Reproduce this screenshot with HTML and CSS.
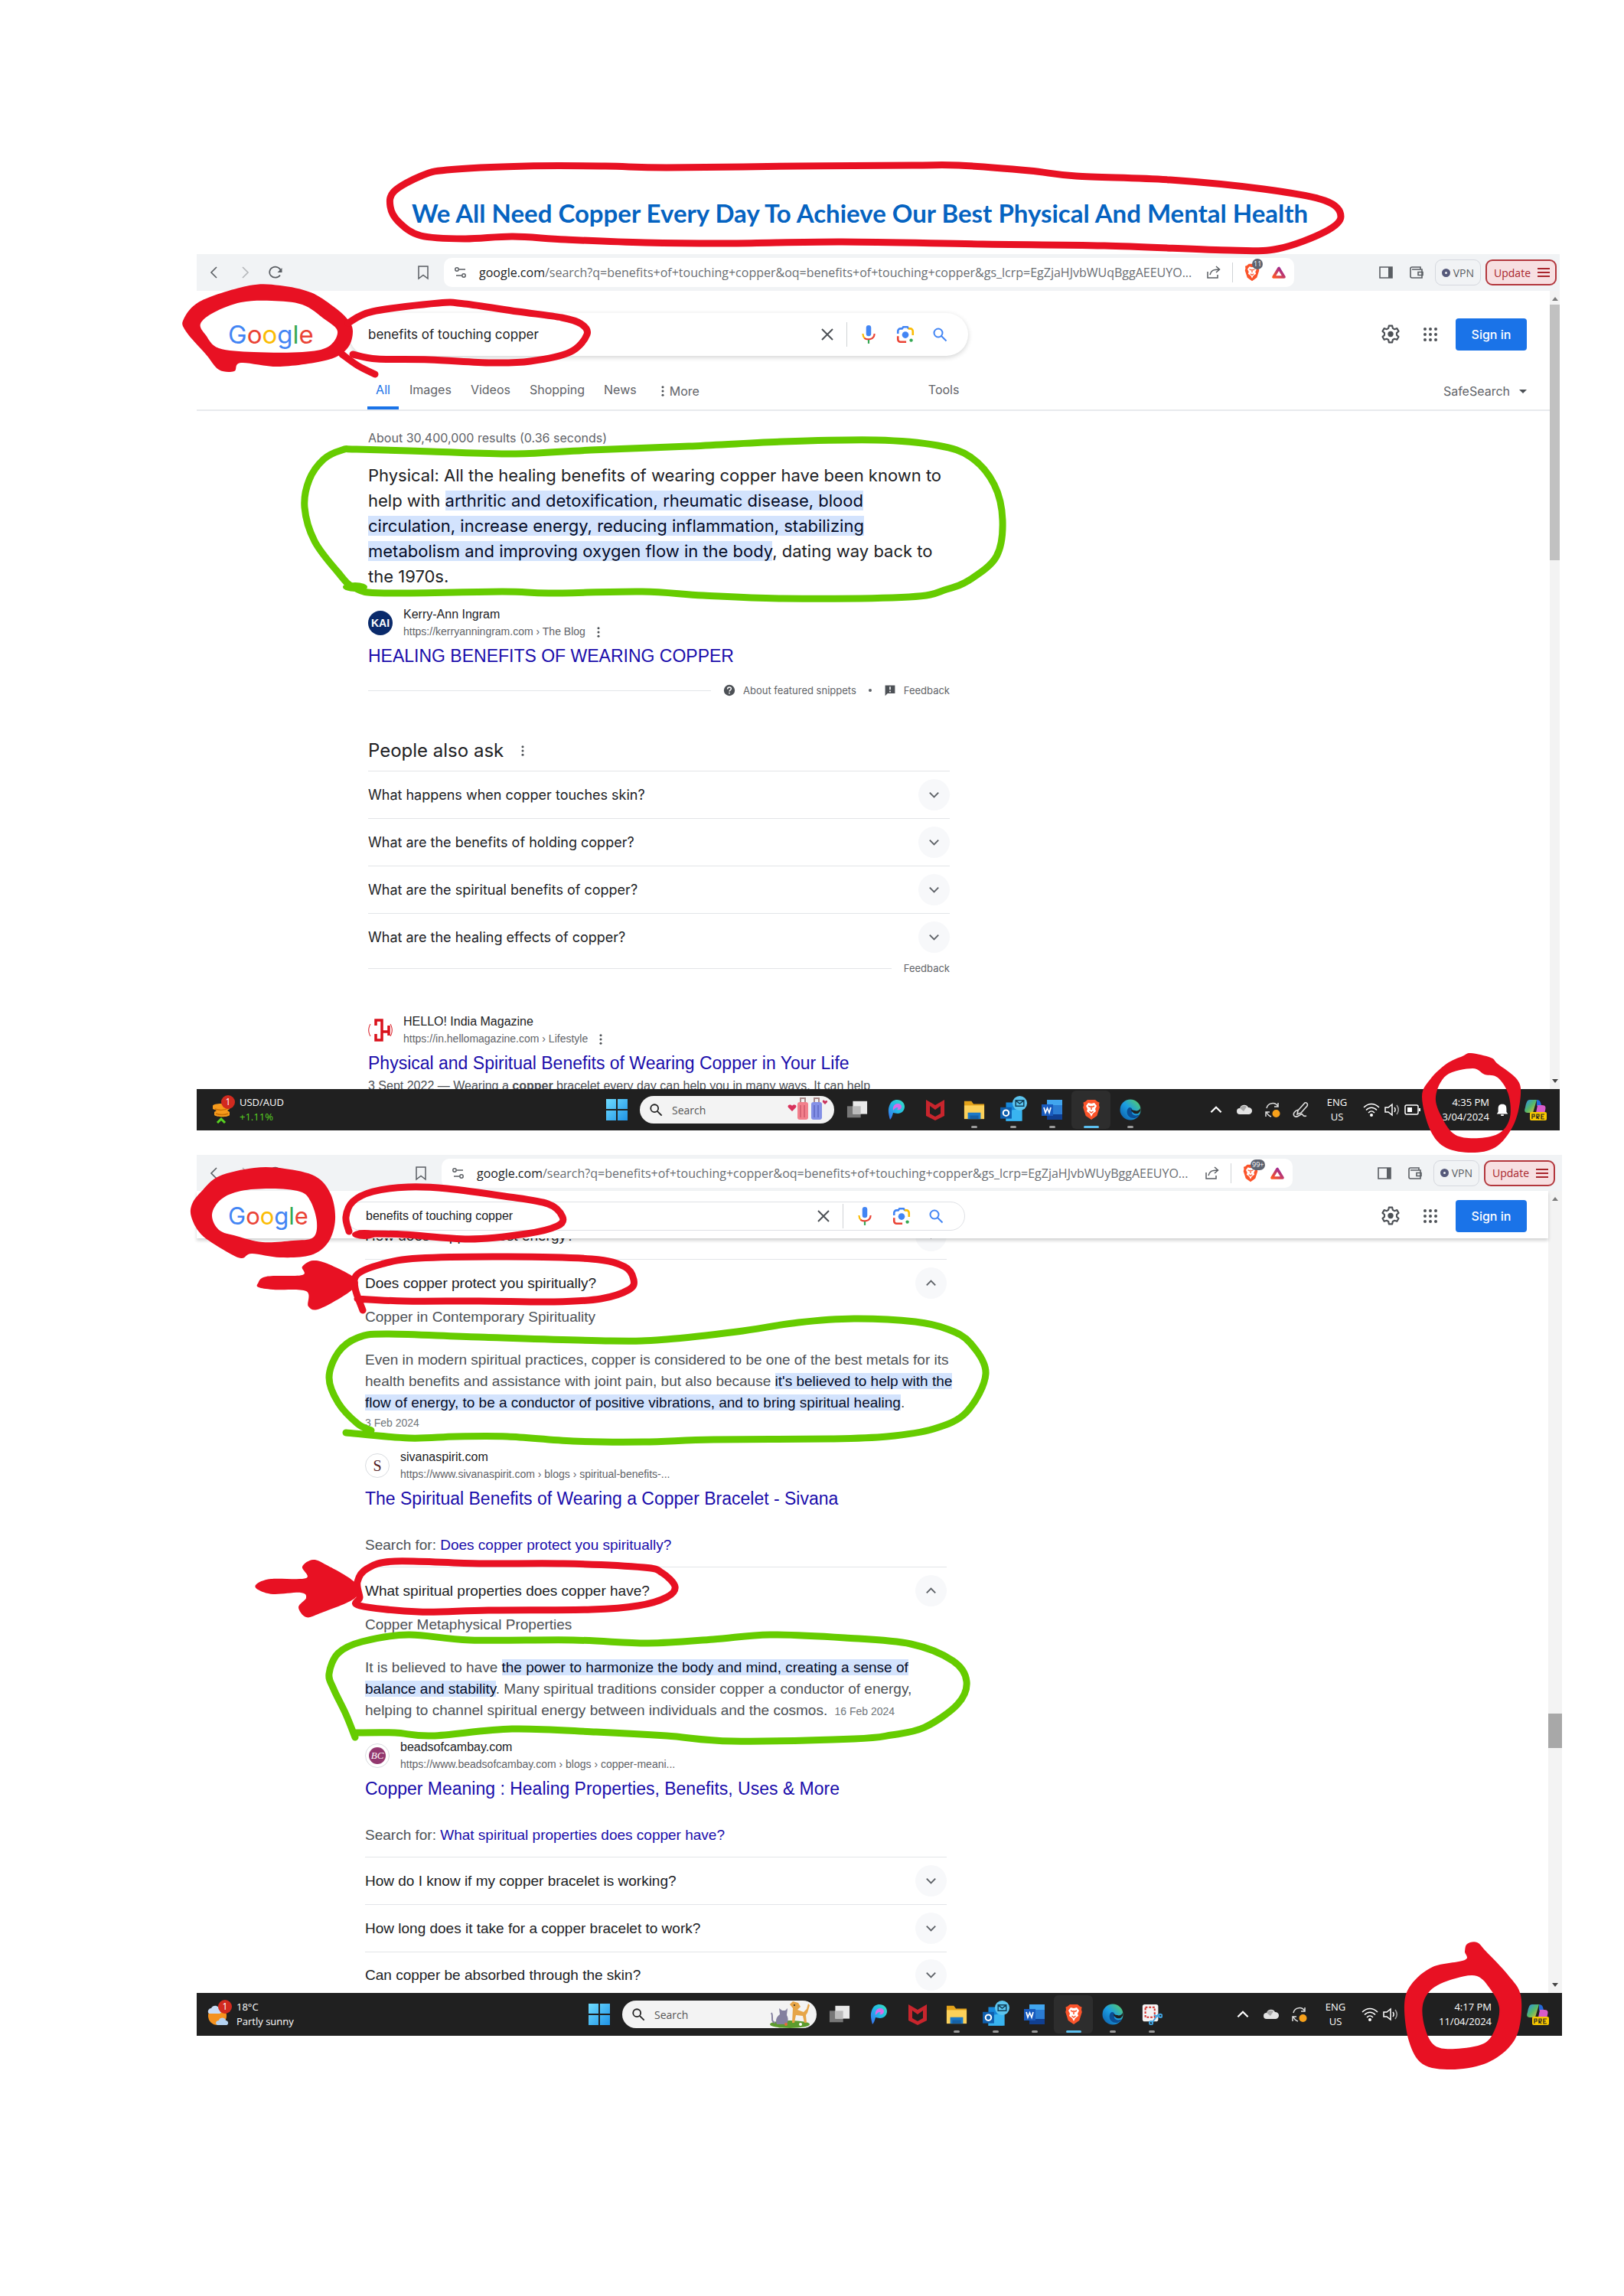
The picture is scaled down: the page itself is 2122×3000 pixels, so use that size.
FILE: index.html
```html
<!DOCTYPE html>
<html lang="en">
  <head>
    <meta charset="UTF-8" />
    <meta name="viewport" content="width=device-width, initial-scale=1.0" />
    <title>We All Need Copper Every Day</title>
    <link rel="stylesheet" href="styles.css">
  </head>
  <body>
    <!-- Shared icons -->
    <svg class="defs" aria-hidden="true">
      <defs>
        <linearGradient id="gWin" x1="0" y1="0" x2="1" y2="1"><stop offset="0" stop-color="#6fdcff"/><stop offset="1" stop-color="#1f93e6"/></linearGradient>
        <linearGradient id="gP" x1="0" y1="1" x2="1" y2="0"><stop offset="0" stop-color="#3a6df0"/><stop offset=".5" stop-color="#22b8e6"/><stop offset="1" stop-color="#37e0c0"/></linearGradient>
        <linearGradient id="gEdge" x1="0" y1="1" x2="1" y2="0"><stop offset="0" stop-color="#0c59a4"/><stop offset=".5" stop-color="#1b9de2"/><stop offset="1" stop-color="#5fd35a"/></linearGradient>
        <linearGradient id="gCop" x1="0" y1="0" x2="1" y2="1"><stop offset="0" stop-color="#2a8cf0"/><stop offset=".5" stop-color="#53b86a"/><stop offset="1" stop-color="#f2c230"/></linearGradient>
        <linearGradient id="gTri" x1="0" y1="1" x2="1" y2="0"><stop offset="0" stop-color="#ff5722"/><stop offset="1" stop-color="#8a1fa8"/></linearGradient>
      </defs>
      <symbol id="back" viewBox="0 0 20 20"><path d="M13 3L6 10l7 7" fill="none" stroke="currentColor" stroke-width="1.6"/></symbol>
      <symbol id="forward" viewBox="0 0 20 20"><path d="M7 3l7 7-7 7" fill="none" stroke="currentColor" stroke-width="1.6"/></symbol>
      <symbol id="reload" viewBox="0 0 20 20"><path d="M16 13.500A7.500 7 0 1 1 17 8" fill="none" stroke="currentColor" stroke-width="1.700"/><path d="M18.500 4v6h-6z" fill="currentColor"/></symbol>
      <symbol id="bookmark" viewBox="0 0 20 20"><path d="M4 2h12v16l-6-4.500L4 18z" fill="none" stroke="currentColor" stroke-width="1.500"/></symbol>
      <symbol id="tune" viewBox="0 0 20 20"><g fill="none" stroke="currentColor" stroke-width="1.500"><circle cx="5" cy="6" r="2.200"/><path d="M8 6h8M4 14h7"/><circle cx="14" cy="14" r="2.200"/></g></symbol>
      <symbol id="share" viewBox="0 0 20 20"><g fill="none" stroke="currentColor" stroke-width="1.500"><path d="M2 9v8h13v-4"/><path d="M5 13c1-5 4-7 12-7M13 2l4.500 4-4.500 4"/></g></symbol>
      <symbol id="lion" viewBox="0 0 24 28"><path d="M7 1h10l3 2.500 2.500 1L22 8l.8 3-3.500 11L12 27l-7.300-5L1.200 11 2 8l-.5-3.500 2.500-1z" fill="#fb542b"/><path d="M12 6l4-1 3 4-2 4 1 3-4 3-2 4-2-4-4-3 1-3-2-4 3-4z" fill="#fff"/><path d="M12 9v5M8 9l3 1.500M16 9l-3 1.500M9.500 16l2.500 2 2.500-2" stroke="#fb542b" stroke-width="1.500" fill="none"/></symbol>
      <symbol id="bat" viewBox="0 0 20 18"><path d="M10 3.500L3 15h14z" fill="none" stroke="url(#gTri)" stroke-width="3.600" stroke-linejoin="round"/></symbol>
      <symbol id="sidebar" viewBox="0 0 20 20"><path d="M2 3h16v14H2z" fill="none" stroke="currentColor" stroke-width="1.600"/><path d="M13 3h5v14h-5z" fill="currentColor"/></symbol>
      <symbol id="wallet" viewBox="0 0 20 20"><g fill="none" stroke="currentColor" stroke-width="1.600"><path d="M15 6V3H4a2 2 0 0 0-2 2v10a2 2 0 0 0 2 2h13V6H4"/><path d="M18 9.500h-6v4h6z"/></g></symbol>
      <symbol id="close" viewBox="0 0 20 20"><path d="M3 3l14 14M17 3L3 17" stroke="#4d5156" stroke-width="2"/></symbol>
      <symbol id="mic" viewBox="0 0 24 24"><rect x="9" y="1" width="6" height="13" rx="3" fill="#4285f4"/><path d="M5 11c0 3 1 4.500 2.500 6" stroke="#fbbc04" stroke-width="2" fill="none"/><path d="M7 16.500c3 2.500 12 2 12-5.500" stroke="#ea4335" stroke-width="2" fill="none"/><path d="M11 18.500h2V23h-2z" fill="#34a853"/></symbol>
      <symbol id="lens" viewBox="0 0 24 24"><circle cx="12" cy="12.500" r="4" fill="#4285f4"/><g fill="none" stroke-width="2.400"><path d="M3 11V8a3 3 0 0 1 3-3h2l1.500-2h5L16 5" stroke="#4285f4"/><path d="M15.500 5H18a3 3 0 0 1 3 3v5" stroke="#fbbc04"/><path d="M3 14v4a3 3 0 0 0 3 3h7" stroke="#ea4335"/></g><circle cx="19" cy="19" r="2" fill="#34a853"/></symbol>
      <symbol id="glass" viewBox="0 0 20 20"><circle cx="8" cy="8" r="5.500" fill="none" stroke="currentColor" stroke-width="2"/><path d="M12 12l6.500 6.500" stroke="currentColor" stroke-width="2"/></symbol>
      <symbol id="gear" viewBox="0 0 24 24"><path d="M10 1.500h4l.6 3 2.200 1.200 2.900-1 2 3.500-2.300 2v2.600l2.300 2-2 3.500-2.900-1-2.200 1.200-.6 3h-4l-.6-3-2.200-1.200-2.900 1-2-3.500 2.300-2v-2.600l-2.300-2 2-3.500 2.900 1 2.200-1.200z" fill="none" stroke="#4d5156" stroke-width="2" stroke-linejoin="round"/><circle cx="12" cy="11.500" r="3.400" fill="#4d5156"/></symbol>
      <symbol id="grid" viewBox="0 0 20 20"><g fill="#4d5156"><circle cx="3" cy="3" r="2"/><circle cx="10" cy="3" r="2"/><circle cx="17" cy="3" r="2"/><circle cx="3" cy="10" r="2"/><circle cx="10" cy="10" r="2"/><circle cx="17" cy="10" r="2"/><circle cx="3" cy="17" r="2"/><circle cx="10" cy="17" r="2"/><circle cx="17" cy="17" r="2"/></g></symbol>
      <symbol id="dots" viewBox="0 0 6 18"><g fill="#4d5156"><circle cx="3" cy="3" r="1.700"/><circle cx="3" cy="9" r="1.700"/><circle cx="3" cy="15" r="1.700"/></g></symbol>
      <symbol id="down" viewBox="0 0 20 20"><path d="M4 7l6 6 6-6" fill="none" stroke="currentColor" stroke-width="2"/></symbol>
      <symbol id="up" viewBox="0 0 20 20"><path d="M4 13l6-6 6 6" fill="none" stroke="currentColor" stroke-width="2"/></symbol>
      <symbol id="help" viewBox="0 0 20 20"><circle cx="10" cy="10" r="9" fill="#4d5156"/><path d="M7 8c0-4 6-4 6-.5 0 2-3 2-3 4.500M10 13.500v2" fill="none" stroke="#fff" stroke-width="1.800"/></symbol>
      <symbol id="flag" viewBox="0 0 20 20"><path d="M2 2h16v13H6l-4 4z" fill="#4d5156"/><path d="M10 4v5M10 11v2" stroke="#fff" stroke-width="2"/></symbol>
      <symbol id="windows" viewBox="0 0 28 28"><path d="M0 0h13v13H0zM15 0h13v13H15zM0 15h13v13H0zM15 15h13v13H15z" fill="url(#gWin)"/></symbol>
      <symbol id="taskview" viewBox="0 0 30 28"><path d="M1 9h19v16H1z" fill="#777"/><path d="M9 2h20v18H9z" fill="#e9e9e9"/><path d="M9 9h11v11H9z" fill="#bbb"/></symbol>
      <symbol id="pieces" viewBox="0 0 24 28"><path d="M4 27C2 20 1 14 3 9 5 3 9 1 13 1c6 0 10 4 10 9s-4 9-9 9c-3 0-4-1-6-1-1 4-2 7-4 9z" fill="url(#gP)"/><path d="M8 15c-1-5 2-9 6-9 3 0 5 2 5 4 0 3-3 5-6 4 1-1 2-2 1-3-3 0-4 2-6 4z" fill="#d96be8"/></symbol>
      <symbol id="mcafee" viewBox="0 0 26 28"><path d="M1 1l12 7 12-7v21l-12 6-12-6z" fill="#c8252d"/><path d="M6 9l7 5 7-5v10l-7 4-7-4z" fill="#202020"/></symbol>
      <symbol id="folder" viewBox="0 0 30 28"><path d="M1 2h10l3 4h15v20H1z" fill="#e3a21a"/><path d="M1 8h28v19H1z" fill="#fcd15a"/><path d="M6 18h18v9H6z" fill="#1c79c7"/><path d="M9 22h12v5H9z" fill="#1560a5"/></symbol>
      <symbol id="outlook" viewBox="0 0 34 36"><path d="M8 9h18v23H8z" fill="#1687d9"/><path d="M8 20l20-4v16H8z" fill="#39b4f0"/><path d="M1 15h14v14H1z" fill="#0f5fae"/><circle cx="8" cy="22" r="3.500" fill="none" stroke="#fff" stroke-width="2"/><circle cx="25" cy="10" r="9" fill="#5cc4ee"/><path d="M20 6.500h10v7H20zl5 4 5-4" fill="none" stroke="#12405a" stroke-width="1.400"/></symbol>
      <symbol id="word" viewBox="0 0 28 28"><path d="M7 1h20v26H7z" fill="#2b7cd3"/><path d="M7 1h20v7H7z" fill="#41a5ee"/><path d="M7 20h20v7H7z" fill="#103f91"/><path d="M0 7h15v15H0z" fill="#185abd"/><path d="M3 11l2 7 2.500-6 2.500 6 2-7" fill="none" stroke="#fff" stroke-width="1.700"/></symbol>
      <symbol id="edge" viewBox="0 0 28 28"><circle cx="14" cy="14" r="13.500" fill="url(#gEdge)"/><path d="M10 14c-2 6 3 12 10 11 3-1 5-3 6-5-5 3-11 1-10-4 1-2 0-5-3-5-1 0-2 1-3 3z" fill="#0b4e94"/><path d="M15 14c1 4 5 6 9 5 3-2 4-5 3-7-1 3-5 4-7 3-3 0-4-2-5-1z" fill="#202020"/></symbol>
      <symbol id="snip" viewBox="0 0 30 30"><rect x="2" y="1" width="22" height="24" rx="3" fill="#f3f3f3"/><rect x="6" y="5" width="13" height="14" fill="none" stroke="#d5302c" stroke-width="2.200" stroke-dasharray="3 2"/><path d="M15 27l9-12M18 16l9 3" stroke="#3fa3e0" stroke-width="2"/><circle cx="14" cy="27" r="2.300" fill="none" stroke="#3fa3e0" stroke-width="2"/><circle cx="27" cy="17" r="2.300" fill="none" stroke="#3fa3e0" stroke-width="2"/></symbol>
      <symbol id="cloud" viewBox="0 0 22 16"><path d="M5 14a4 4 0 0 1 0-8 6 6 0 0 1 11-1 4.500 4.500 0 0 1 1 9z" fill="#e4e4e4"/><path d="M5 6a6 6 0 0 1 9-2l-4 6z" fill="#aaa"/></symbol>
      <symbol id="sync" viewBox="0 0 22 22"><path d="M3 9a8 8 0 0 1 15-2M18 2v5h-5M2 20v-6h5M3 14c1 3 3 5 6 6" fill="none" stroke="#ddd" stroke-width="1.500"/><circle cx="15.500" cy="16" r="5" fill="#f7a11b"/></symbol>
      <symbol id="pen" viewBox="0 0 22 22"><path d="M7 12L16 2c3-1 4 2 3 4l-8 9-5 2zM8 11c-5 1-8 5-6 8 3 3 6 0 9-2s1 4 7 2" fill="none" stroke="#ddd" stroke-width="1.600"/></symbol>
      <symbol id="wifi" viewBox="0 0 22 20"><g fill="none" stroke="#fff" stroke-width="1.500"><path d="M1 7c6-6 14-6 20 0M4 10.500c4-4.500 10-4.500 14 0M7 14c3-3 5-3 8 0"/></g><circle cx="11" cy="17" r="2" fill="#fff"/></symbol>
      <symbol id="volume" viewBox="0 0 22 20"><g fill="none" stroke="#fff" stroke-width="1.500"><path d="M2 7h4l5-4v14l-5-4H2zM14 7c1.500 2 1.500 4 0 6"/><path d="M17 4c3 4 3 8 0 12" opacity=".6"/></g></symbol>
      <symbol id="battery" viewBox="0 0 22 20"><rect x="1" y="4" width="17" height="12" rx="2" fill="none" stroke="#fff" stroke-width="1.500"/><path d="M4 7h6v6H4zM19 8h2v4h-2z" fill="#fff"/></symbol>
      <symbol id="bell" viewBox="0 0 20 20"><path d="M10 2c-5 0-6 3-6 7v4l-2 3h16l-2-3V9c0-4-1-7-6-7zM8 17h4v2H8z" fill="#fff"/></symbol>
      <symbol id="copilot" viewBox="0 0 32 32"><path d="M8 3h9l-5 17H5c-5 0-4-4-3-7 1-5 2-10 6-10z" fill="url(#gCop)"/><path d="M17 3c5 0 5 4 6 7l-6 1z" fill="#2468d8"/><path d="M18 10h6c5 0 5 3 4 7-1 5-2 8-6 8h-7z" fill="#d85bc9"/><rect x="8" y="19" width="22" height="11" rx="2" fill="#f8c800"/><path d="M11 28v-6h3v3h-3M17 28v-6h3v3h-3l3 3M27 22h-4v6h4M23 25h3" stroke="#222" stroke-width="1.200" fill="none"/></symbol>
      <symbol id="money" viewBox="0 0 34 36"><path d="M3 13c0-4 22-4 22 0v4l-3 2 3 2v4c-2 3-17 3-20 0v-4l3-2-5-2z" fill="#f59a1c"/><path d="M6 17c5 2 13 2 17-1M7 23c5 2 12 2 16 0" stroke="#c96f05" stroke-width="1.500" fill="none"/><path d="M9 35l5-5 5 5" fill="none" stroke="#58d321" stroke-width="3"/></symbol>
      <symbol id="weather" viewBox="0 0 34 36"><circle cx="13" cy="20" r="12" fill="#f5921e"/><path d="M2 17c-3-3 0-7 3-7 2-5 10-4 10 1 4 1 4 6 0 6z" fill="#c8dcf5"/><path d="M14 32c-4 0-4-6 1-6 1-5 9-4 9 0 4 0 4 6 1 6z" fill="#b4d2f2"/></symbol>
      <symbol id="luggage" viewBox="0 0 54 36"><path d="M7 20l-5-5c-2-3 3-5 5-2 2-3 7-1 5 2z" fill="#d8325c"/><path d="M18 8V3h6v5M36 8V3h6v5" fill="none" stroke="#a88" stroke-width="2"/><rect x="14" y="8" width="14" height="23" rx="3" fill="#f2808c"/><rect x="32" y="8" width="14" height="23" rx="3" fill="#8490e6"/><path d="M18 12v16M23 12v16" stroke="#cf5a6b" stroke-width="1.500"/><path d="M36 12v16M41 12v16" stroke="#5d68c4" stroke-width="1.500"/><path d="M50 11l-3-3c-1-3 2-3 3-1 1-2 4-1 3 1z" fill="#c9315c"/></symbol>
      <symbol id="pets" viewBox="0 0 54 36"><ellipse cx="27" cy="31" rx="26" ry="5" fill="#5d9c2e"/><path d="M10 31c-3-6 1-11 4-13l-1-8 4 3h4l3-3-1 9c3 5 1 10 0 12z" fill="#84809f"/><path d="M8 29c-7-2-2-8-5-13" fill="none" stroke="#84809f" stroke-width="2"/><path d="M27 5l4-4 7 2 3 5-4 4 8 3 4-4 2-7 2 2-3 10-2 3 1 10h-3l-2-9-9-1-2 10h-3l1-19z" fill="#e6a548"/><circle cx="33" cy="6" r="1" fill="#222"/><circle cx="22" cy="31" r="2" fill="#e56a3a"/><circle cx="41" cy="31" r="2" fill="#fff"/></symbol>
    </svg>

    <main class="sheet">
      <h1>We All Need Copper Every Day To Achieve Our Best Physical And Mental Health</h1>

      <section class="shot shot-first">
        <div class="toolbar">
          <div class="nav">
            <button aria-label="Back"><svg><use href="#back"/></svg></button>
            <button aria-label="Forward" class="faded"><svg><use href="#forward"/></svg></button>
            <button aria-label="Reload"><svg><use href="#reload"/></svg></button>
            <button aria-label="Bookmark" class="push"><svg><use href="#bookmark"/></svg></button>
          </div>
          <div class="address">
            <svg><use href="#tune"/></svg>
            <p class="url"><b>google.com</b>/search?q=benefits+of+touching+copper&amp;oq=benefits+of+touching+copper&amp;gs_lcrp=EgZjaHJvbWUqBggAEEUYO...</p>
            <svg><use href="#share"/></svg>
            <span class="bar"></span>
            <span class="shield"><svg><use href="#lion"/></svg><i>11</i></span>
            <svg><use href="#bat"/></svg>
          </div>
          <div class="chrome-tools">
            <svg><use href="#sidebar"/></svg>
            <svg><use href="#wallet"/></svg>
            <button class="vpn"><i></i>VPN</button>
            <button class="update">Update <span></span></button>
          </div>
        </div>
        <div class="view">
          <div class="page">
            <header class="head">
              <a class="logo" href="#" aria-label="Google"><span class="b">G</span><span class="r">o</span><span class="y">o</span><span class="b">g</span><span class="g">l</span><span class="r">e</span></a>
              <form class="search">
                <input type="text" aria-label="Search" value="benefits of touching copper">
                <svg><use href="#close"/></svg>
                <span class="bar"></span>
                <svg class="big"><use href="#mic"/></svg>
                <svg class="big"><use href="#lens"/></svg>
                <svg class="blue"><use href="#glass"/></svg>
              </form>
              <div class="account">
                <svg class="big"><use href="#gear"/></svg>
                <svg><use href="#grid"/></svg>
                <button class="signin">Sign in</button>
              </div>
            </header>
            <nav class="tabs">
              <a class="active" href="#">All</a>
              <a href="#">Images</a>
              <a href="#">Videos</a>
              <a href="#">Shopping</a>
              <a href="#">News</a>
              <a class="more" href="#"><svg class="dots"><use href="#dots"/></svg>More</a>
              <a class="tools" href="#">Tools</a>
              <button class="safe">SafeSearch <span></span></button>
            </nav>
            <div class="results">
              <p class="stats">About 30,400,000 results (0.36 seconds)</p>
              <p class="answer">Physical: All the healing benefits of wearing copper have been known to<br>help with <mark>arthritic and detoxification, rheumatic disease, blood<br>circulation, increase energy, reducing inflammation, stabilizing<br>metabolism and improving oxygen flow in the body</mark>, dating way back to<br>the 1970s.</p>
              <div class="site">
                <span class="favicon kai">KAI</span>
                <div>
                  <div class="name">Kerry-Ann Ingram</div>
                  <div class="path">https://kerryanningram.com › The Blog <svg class="dots"><use href="#dots"/></svg></div>
                </div>
              </div>
              <h3><a href="#">HEALING BENEFITS OF WEARING COPPER</a></h3>
              <div class="foot snippet-foot">
                <span class="rule"></span>
                <a href="#"><svg><use href="#help"/></svg>About featured snippets</a>
                <span class="dot"></span>
                <a href="#"><svg><use href="#flag"/></svg>Feedback</a>
              </div>
              <h2>People also ask <svg class="dots"><use href="#dots"/></svg></h2>
              <button class="question">What happens when copper touches skin?<i><svg><use href="#down"/></svg></i></button>
              <button class="question">What are the benefits of holding copper?<i><svg><use href="#down"/></svg></i></button>
              <button class="question">What are the spiritual benefits of copper?<i><svg><use href="#down"/></svg></i></button>
              <button class="question">What are the healing effects of copper?<i><svg><use href="#down"/></svg></i></button>
              <div class="foot paa-foot">
                <span class="rule"></span>
                <a href="#">Feedback</a>
              </div>
              <div class="site site-hello">
                <span class="favicon"><svg viewBox="0 0 32 32"><path d="M10 10V3h8v26h-8v-8M18 18h8M27 10v13" fill="none" stroke="#d9121c" stroke-width="3.500"/><path d="M3 8c-3 5-3 11 0 16M29 8c3 5 3 11 0 16" fill="none" stroke="#d9121c" stroke-width="1"/></svg></span>
                <div>
                  <div class="name">HELLO! India Magazine</div>
                  <div class="path">https://in.hellomagazine.com › Lifestyle <svg class="dots"><use href="#dots"/></svg></div>
                </div>
              </div>
              <h3><a href="#">Physical and Spiritual Benefits of Wearing Copper in Your Life</a></h3>
              <p class="cut">3 Sept 2022 — Wearing a <b>copper</b> bracelet every day can help you in many ways. It can help</p>
            </div>
          </div>
          <div class="scroll"><span></span></div>
        </div>
        <footer class="taskbar">
          <div class="widget"><span class="alert"><svg><use href="#money"/></svg><i>1</i></span><p>USD/AUD<br><span class="gain">+1.11%</span></p></div>
          <svg class="win"><use href="#windows"/></svg>
          <label class="find"><svg><use href="#glass"/></svg><input type="text" placeholder="Search" aria-label="Search Windows"><svg class="art"><use href="#luggage"/></svg></label>
          <div class="apps">
            <span><svg><use href="#taskview"/></svg></span>
            <span><svg><use href="#pieces"/></svg></span>
            <span><svg><use href="#mcafee"/></svg></span>
            <span class="open"><svg><use href="#folder"/></svg></span>
            <span class="open"><svg class="tall"><use href="#outlook"/></svg></span>
            <span class="open"><svg><use href="#word"/></svg></span>
            <span class="open current"><svg><use href="#lion"/></svg></span>
            <span class="open"><svg><use href="#edge"/></svg></span>
          </div>
          <div class="tray">
            <span><svg class="white"><use href="#up"/></svg></span>
            <span><svg><use href="#cloud"/></svg></span>
            <span><svg><use href="#sync"/></svg></span>
            <span><svg><use href="#pen"/></svg></span>
            <p class="lang">ENG<br>US</p>
            <svg><use href="#wifi"/></svg><svg><use href="#volume"/></svg><svg><use href="#battery"/></svg>
            <p class="clock">4:35 PM<br>3/04/2024</p>
            <svg class="bell"><use href="#bell"/></svg>
            <svg class="copilot"><use href="#copilot"/></svg>
          </div>
        </footer>
      </section>

      <section class="shot shot-second">
        <div class="toolbar">
          <div class="nav">
            <button aria-label="Back"><svg><use href="#back"/></svg></button>
            <button aria-label="Forward" class="faded"><svg><use href="#forward"/></svg></button>
            <button aria-label="Reload"><svg><use href="#reload"/></svg></button>
            <button aria-label="Bookmark" class="push"><svg><use href="#bookmark"/></svg></button>
          </div>
          <div class="address">
            <svg><use href="#tune"/></svg>
            <p class="url"><b>google.com</b>/search?q=benefits+of+touching+copper&amp;oq=benefits+of+touching+copper&amp;gs_lcrp=EgZjaHJvbWUyBggAEEUYO...</p>
            <svg><use href="#share"/></svg>
            <span class="bar"></span>
            <span class="shield"><svg><use href="#lion"/></svg><i>99+</i></span>
            <svg><use href="#bat"/></svg>
          </div>
          <div class="chrome-tools">
            <svg><use href="#sidebar"/></svg>
            <svg><use href="#wallet"/></svg>
            <button class="vpn"><i></i>VPN</button>
            <button class="update">Update <span></span></button>
          </div>
        </div>
        <div class="view">
          <div class="page">
            <header class="head sticky">
              <a class="logo" href="#" aria-label="Google"><span class="b">G</span><span class="r">o</span><span class="y">o</span><span class="b">g</span><span class="g">l</span><span class="r">e</span></a>
              <form class="search">
                <input type="text" aria-label="Search" value="benefits of touching copper">
                <svg><use href="#close"/></svg>
                <span class="bar"></span>
                <svg class="big"><use href="#mic"/></svg>
                <svg class="big"><use href="#lens"/></svg>
                <svg class="blue"><use href="#glass"/></svg>
              </form>
              <div class="account">
                <svg class="big"><use href="#gear"/></svg>
                <svg><use href="#grid"/></svg>
                <button class="signin">Sign in</button>
              </div>
            </header>
            <div class="results">
              <div class="under"><button class="question">How does copper boost energy?<i><svg><use href="#down"/></svg></i></button></div>
              <button class="question">Does copper protect you spiritually?<i><svg><use href="#up"/></svg></i></button>
              <p class="topic">Copper in Contemporary Spirituality</p>
              <p class="extract">Even in modern spiritual practices, copper is considered to be one of the best metals for its<br>health benefits and assistance with joint pain, but also because <mark>it's believed to help with the<br>flow of energy, to be a conductor of positive vibrations, and to bring spiritual healing</mark>.</p>
              <p class="date">3 Feb 2024</p>
              <div class="site">
                <span class="favicon sivana">S</span>
                <div>
                  <div class="name">sivanaspirit.com</div>
                  <div class="path">https://www.sivanaspirit.com › blogs › spiritual-benefits-...</div>
                </div>
              </div>
              <h3><a href="#">The Spiritual Benefits of Wearing a Copper Bracelet - Sivana</a></h3>
              <p class="related">Search for: <a href="#">Does copper protect you spiritually?</a></p>
              <button class="question">What spiritual properties does copper have?<i><svg><use href="#up"/></svg></i></button>
              <p class="topic">Copper Metaphysical Properties</p>
              <p class="extract">It is believed to have <mark>the power to harmonize the body and mind, creating a sense of<br>balance and stability</mark>. Many spiritual traditions consider copper a conductor of energy,<br>helping to channel spiritual energy between individuals and the cosmos. <small>16 Feb 2024</small></p>
              <div class="site">
                <span class="favicon beads"><em>BC</em></span>
                <div>
                  <div class="name">beadsofcambay.com</div>
                  <div class="path">https://www.beadsofcambay.com › blogs › copper-meani...</div>
                </div>
              </div>
              <h3><a href="#">Copper Meaning : Healing Properties, Benefits, Uses &amp; More</a></h3>
              <p class="related">Search for: <a href="#">What spiritual properties does copper have?</a></p>
              <button class="question">How do I know if my copper bracelet is working?<i><svg><use href="#down"/></svg></i></button>
              <button class="question">How long does it take for a copper bracelet to work?<i><svg><use href="#down"/></svg></i></button>
              <button class="question last">Can copper be absorbed through the skin?<i><svg><use href="#down"/></svg></i></button>
            </div>
          </div>
          <div class="scroll"><span></span></div>
        </div>
        <footer class="taskbar">
          <div class="widget"><span class="alert"><svg><use href="#weather"/></svg><i>1</i></span><p>18°C<br>Partly sunny</p></div>
          <svg class="win"><use href="#windows"/></svg>
          <label class="find"><svg><use href="#glass"/></svg><input type="text" placeholder="Search" aria-label="Search Windows"><svg class="art"><use href="#pets"/></svg></label>
          <div class="apps">
            <span><svg><use href="#taskview"/></svg></span>
            <span><svg><use href="#pieces"/></svg></span>
            <span><svg><use href="#mcafee"/></svg></span>
            <span class="open"><svg><use href="#folder"/></svg></span>
            <span class="open"><svg class="tall"><use href="#outlook"/></svg></span>
            <span class="open"><svg><use href="#word"/></svg></span>
            <span class="open current"><svg><use href="#lion"/></svg></span>
            <span class="open"><svg><use href="#edge"/></svg></span>
            <span class="open"><svg><use href="#snip"/></svg></span>
          </div>
          <div class="tray">
            <span><svg class="white"><use href="#up"/></svg></span>
            <span><svg><use href="#cloud"/></svg></span>
            <span><svg><use href="#sync"/></svg></span>
            <p class="lang">ENG<br>US</p>
            <svg><use href="#wifi"/></svg><svg><use href="#volume"/></svg>
            <p class="clock">4:17 PM<br>11/04/2024</p>
            <svg class="bell"><use href="#bell"/></svg>
            <svg class="copilot"><use href="#copilot"/></svg>
          </div>
        </footer>
      </section>

      <!-- Pen marks drawn over the page: data-line is a stroke, data-area a filled shape -->
      <svg class="marks" viewBox="0 0 2122 3000" aria-hidden="true">
        <g class="red">
          <path data-closed data-line="584,222 688,217 791,217 871,219 1044,217 1192,216 1253,216 1345,223 1406,230 1529,235 1651,247 1731,262 1752,283 1731,303 1670,325 1608,327 1443,321 1284,319 1100,316 958,318 843,317 739,313 670,309 607,312 550,308 521,290 510,270 515,250 550,230"/>
          <path data-area="240,417 263,393 326,373 366,373 406,382 435,400 454,417 461,433 454,455 429,470 366,479 315,474 306,485 286,483 269,463 243,433|262,423 280,408 315,395 355,393 395,398 424,417 441,433 429,453 395,460 332,460 286,455 269,438"/>
          <path data-line="447,463 468,478 490,489"/>
          <path data-line="455,422 487,407 573,396 607,397 676,407 734,415 759,423 767,437 745,460 693,472 642,474 561,470 493,469 461,463"/>
          <path data-area="1911,1380 1922,1376 1948,1382 1957,1390 1982,1410 1987,1430 1979,1467 1957,1497 1927,1506 1890,1500 1869,1477 1858,1433 1869,1410 1890,1390|1890,1405 1924,1396 1940,1404 1957,1408 1971,1430 1973,1460 1960,1480 1933,1487 1902,1483 1884,1460 1876,1433"/>
          <path data-area="251,1573 263,1557 286,1537 332,1526 372,1527 412,1537 432,1560 438,1593 429,1623 406,1640 366,1643 329,1638 315,1644 292,1633 263,1613 250,1590|277,1587 289,1567 315,1556 355,1553 392,1557 406,1570 414,1597 409,1617 383,1621 343,1623 309,1615 286,1607"/>
          <path data-line="456,1609 452,1590 461,1570 487,1557 533,1551 584,1553 659,1563 716,1573 735,1590 728,1602 688,1612 613,1619 527,1613 470,1612"/>
          <ellipse cx="476" cy="1613" rx="16" ry="6"/>
          <path data-line="467,1697 528,1700 626,1700 724,1701 785,1697 822,1685 828,1672 816,1655 773,1645 663,1642 547,1644 498,1652 467,1665 464,1683 474,1712"/>
          <path data-area="337,1677 348,1668 395,1666 395,1655 409,1647 430,1652 466,1672 458,1687 418,1710 403,1707 400,1687 357,1685 338,1682"/>
          <path data-closed data-line="470,2098 547,2106 638,2104 773,2103 834,2098 871,2087 882,2073 865,2055 841,2048 736,2043 626,2043 516,2040 479,2050 467,2067 470,2087"/>
          <path data-area="335,2070 354,2063 400,2062 395,2047 409,2038 427,2045 464,2068 464,2088 418,2108 400,2113 390,2100 400,2088 393,2081 357,2083 337,2077"/>
          <path data-area="1914,2550 1917,2540 1930,2538 1942,2550 1970,2580 1987,2607 1985,2650 1970,2677 1939,2697 1896,2704 1859,2697 1841,2667 1835,2620 1844,2593 1872,2570 1914,2561|1872,2598 1902,2585 1930,2582 1948,2600 1959,2623 1954,2650 1939,2670 1902,2677 1875,2673 1862,2650 1859,2620"/>
        </g>
        <g class="green">
          <path data-closed data-line="466,587 564,590 674,593 772,588 900,583 1023,577 1145,575 1225,582 1268,597 1299,633 1310,680 1302,727 1268,757 1237,770 1188,780 1023,782 919,778 839,773 717,775 656,773 502,775 463,768 441,747 411,707 398,663 404,627 423,600 447,588"/>
          <ellipse cx="464" cy="767" rx="16" ry="6"/>
          <path data-line="452,1872 534,1879 596,1877 663,1877 749,1883 841,1884 932,1881 1085,1880 1159,1877 1220,1867 1263,1845 1288,1795 1268,1755 1239,1737 1196,1727 1116,1723 1043,1728 963,1740 871,1750 798,1752 626,1747 504,1743 467,1748 442,1767 430,1800 442,1833 467,1860 485,1869"/>
          <path data-line="464,2270 452,2240 436,2207 430,2187 442,2160 473,2145 534,2136 614,2143 749,2143 847,2147 932,2142 1006,2136 1104,2140 1190,2148 1245,2170 1263,2197 1251,2227 1208,2257 1165,2267 1116,2272 957,2275 871,2268 779,2263 669,2259 565,2268 516,2264 464,2264"/>
        </g>
      </svg>
    </main>

    <script>
      // Turn a list of points into a smooth curve
      function smooth(text, closed) {
        const p = text.trim().split(" ").map((pair) => pair.split(",").map(Number));
        const n = p.length;
        const at = (i) => (closed ? p[(i + n) % n] : p[Math.max(0, Math.min(n - 1, i))]);
        let d = "M" + p[0];
        for (let i = 0; i < (closed ? n : n - 1); i++) {
          const [a, b, c, e] = [at(i - 1), at(i), at(i + 1), at(i + 2)];
          d += `C${b[0] + (c[0] - a[0]) / 6},${b[1] + (c[1] - a[1]) / 6} ${c[0] - (e[0] - b[0]) / 6},${c[1] - (e[1] - b[1]) / 6} ${c}`;
        }
        return closed ? d + "Z" : d;
      }

      document.querySelectorAll("[data-line]").forEach((path) => {
        path.setAttribute("d", smooth(path.dataset.line, "closed" in path.dataset));
      });
      document.querySelectorAll("[data-area]").forEach((path) => {
        path.setAttribute("d", path.dataset.area.split("|").map((ring) => smooth(ring, true)).join(""));
      });
    </script>
  </body>
</html>
```

FILE: styles.css
```css
:root {
  --text: #202124;
  --text-light: #5f6368;
  --link: #1a0dab;
  --line: #e3e5e8;
  --mark: #d3e3fd;
  --pen-red: #e81123;
  --pen-green: #66cc00;
  --google-font: Inter, "Liberation Sans", sans-serif;
  --system-font: "Open Sans", "Noto Sans", sans-serif;
}

* {
  margin: 0;
  padding: 0;
  box-sizing: border-box;
}

body {
  background: #fff;
  color: var(--text);
  font-family: "Liberation Sans", sans-serif;
  font-size: 19px;
}

button,
input {
  font: inherit;
  color: inherit;
  border: none;
  background: none;
  outline: none;
}

a {
  color: inherit;
  text-decoration: none;
}

i {
  font-style: normal;
}

svg {
  display: block;
  flex: none;
  width: 20px;
  height: 20px;
}

.defs {
  position: absolute;
  width: 0;
  height: 0;
}

.sheet {
  position: relative;
  padding: 256px 81px 342px 257px;
}

h1 {
  padding-left: 281px;
  margin-bottom: 32px;
  font-family: Lato, sans-serif;
  font-size: 33px;
  line-height: 44px;
  color: #0563c1;
  white-space: nowrap;
}

.shot-first {
  margin-right: 3px;
  margin-bottom: 32px;
}

/* Browser toolbar */
.toolbar {
  display: flex;
  align-items: center;
  height: 48px;
  background: #f1f3f5;
  font-family: var(--system-font);
  font-size: 16px;
  color: #5a5e63;
}

.nav {
  display: flex;
  align-items: center;
  gap: 20px;
  width: 323px;
  padding: 0 17px 0 13px;
}

.nav .faded {
  opacity: 0.4;
}

.nav .push {
  margin-left: auto;
}

.address {
  display: flex;
  flex: 1;
  align-items: center;
  gap: 14px;
  height: 38px;
  padding: 0 10px 0 12px;
  border-radius: 10px;
  background: #fff;
  min-width: 0;
}

.url {
  flex: 1;
  white-space: nowrap;
  color: #6a6e73;
}

.url b {
  font-weight: 400;
  color: var(--text);
}

.bar {
  width: 1px;
  height: 26px;
  background: #d0d3d6;
}

.shield {
  position: relative;
}

.shield svg {
  width: 22px;
  height: 24px;
}

.shield i {
  position: absolute;
  top: -6px;
  left: 11px;
  min-width: 14px;
  padding: 0 2px;
  border-radius: 7px;
  background: #5d6370;
  color: #fff;
  font-size: 9px;
  line-height: 14px;
  text-align: center;
}

.chrome-tools {
  display: flex;
  align-items: center;
  justify-content: flex-end;
  gap: 12px;
  width: 347px;
  padding-right: 4px;
}

.chrome-tools svg {
  margin-right: 8px;
}

.vpn,
.update {
  display: flex;
  align-items: center;
  height: 34px;
  margin-left: -6px;
  border-radius: 9px;
  font-size: 14px;
}

.vpn {
  gap: 4px;
  padding: 0 8px;
  border: 1px solid #d5d8de;
}

.vpn i {
  width: 11px;
  height: 11px;
  border: 4px solid #55597a;
  border-radius: 50%;
}

.update {
  gap: 9px;
  padding: 0 7px 0 9px;
  border: 2px solid #b3373d;
  background: #f7dfe1;
  color: #a8252c;
}

.update span {
  width: 16px;
  height: 12px;
  border-top: 2px solid;
  border-bottom: 2px solid;
  background: linear-gradient(#a8252c, #a8252c) center / 100% 2px no-repeat;
}

/* Search page */
.view {
  display: flex;
}

.page {
  flex: 1;
  min-width: 0;
}

.head {
  display: flex;
  align-items: center;
  padding-top: 29px;
}

.logo {
  width: 199px;
  padding-left: 41px;
  font-family: var(--google-font);
  font-size: 33px;
  line-height: 40px;
}

.logo .b { color: #4285f4; }
.logo .r { color: #ea4335; }
.logo .y { color: #fbbc04; }
.logo .g { color: #34a853; }

.search {
  display: flex;
  align-items: center;
  gap: 22px;
  width: 809px;
  height: 56px;
  padding: 0 27px 0 25px;
  border-radius: 28px;
  box-shadow: 0 2px 6px rgba(32, 33, 36, 0.2);
}

.search input {
  flex: 1;
  min-width: 0;
  font-family: var(--google-font);
  font-size: 17px;
}

.search .bar {
  height: 32px;
  margin: 0 -7px;
}

.search .big,
.account .big {
  width: 26px;
  height: 26px;
}

.blue {
  color: #4285f4;
}

.account {
  display: flex;
  align-items: center;
  gap: 23px;
  margin-left: auto;
  padding-right: 30px;
}

.account .big {
  margin-right: 6px;
}

.signin {
  width: 93px;
  height: 42px;
  border-radius: 4px;
  background: #1a73e8;
  color: #fff;
  font-family: var(--google-font);
  font-size: 16px;
  font-weight: 500;
}

.tabs {
  display: flex;
  gap: 25px;
  margin-top: 22px;
  padding-left: 223px;
  border-bottom: 2px solid #e8eaed;
  font-family: var(--google-font);
  font-size: 16px;
  line-height: 44px;
  color: var(--text-light);
}

.tabs .active {
  width: 41px;
  margin-right: -11px;
  text-align: center;
  color: #1a73e8;
  border-bottom: 4px solid;
}

.more {
  display: flex;
  align-items: center;
  gap: 6px;
  margin-left: 6px;
}

.dots {
  width: 6px;
  height: 16px;
}

.tools {
  margin-left: 274px;
}

.safe {
  display: flex;
  align-items: center;
  gap: 12px;
  margin-left: auto;
  padding-right: 30px;
}

.safe span {
  border: 5px solid transparent;
  border-top-color: #4d5156;
  border-bottom: none;
}

.results {
  width: 760px;
  margin-left: 224px;
}

.stats {
  margin: 22px 0 20px;
  font-family: var(--google-font);
  font-size: 16px;
  line-height: 26px;
  color: var(--text-light);
}

.answer {
  font-family: var(--google-font);
  font-size: 22px;
  line-height: 33px;
  white-space: nowrap;
}

mark {
  background: var(--mark);
  color: #040c28;
}

.site {
  display: flex;
  align-items: center;
  gap: 14px;
  margin: 21px 0 5px;
}

.favicon {
  width: 32px;
  height: 32px;
  border-radius: 50%;
  line-height: 32px;
  text-align: center;
}

.favicon svg {
  width: 32px;
  height: 32px;
}

.kai {
  background: #0a2a6b;
  color: #fff;
  font-size: 14px;
  font-weight: 700;
}

.sivana,
.beads {
  border: 1px solid #d9dce0;
  line-height: 30px;
  font-family: "Liberation Serif", serif;
  font-size: 20px;
}

.sivana {
  color: #53211f;
}

.beads em {
  display: block;
  width: 22px;
  height: 22px;
  margin: 4px;
  border-radius: 50%;
  background: #93376f;
  color: #fff;
  font-size: 13px;
  line-height: 22px;
}

.name {
  font-size: 16px;
  line-height: 23px;
}

.path {
  display: flex;
  gap: 14px;
  align-items: center;
  font-size: 14px;
  line-height: 23px;
  color: var(--text-light);
}

h3 {
  font-size: 23px;
  font-weight: 400;
  line-height: 30px;
  color: var(--link);
  white-space: nowrap;
}

.foot {
  display: flex;
  align-items: center;
  gap: 16px;
  font-family: var(--google-font);
  font-size: 13px;
  line-height: 20px;
  color: var(--text-light);
}

.snippet-foot {
  margin: 20px 0 51px;
}

.foot a {
  display: flex;
  align-items: center;
  gap: 10px;
}

.foot svg {
  width: 16px;
  height: 16px;
}

.rule {
  flex: 1;
  height: 1px;
  background: var(--line);
}

.dot {
  width: 4px;
  height: 4px;
  border-radius: 50%;
  background: var(--text-light);
}

h2 {
  display: flex;
  align-items: center;
  gap: 22px;
  margin-bottom: 8px;
  font-family: var(--google-font);
  font-size: 24px;
  font-weight: 400;
  line-height: 36px;
}

.question {
  display: flex;
  align-items: center;
  justify-content: space-between;
  width: 100%;
  height: 62px;
  border-top: 1px solid var(--line);
  text-align: left;
}

.shot-first .question {
  font-family: var(--google-font);
  font-size: 18px;
}

.question i {
  padding: 11px;
  border-radius: 50%;
  background: #f7f8fa;
  color: #5f6368;
}

.question svg {
  width: 19px;
  height: 19px;
}

.site-hello {
  margin-top: 48px;
}

.cut {
  height: 19px;
  overflow: hidden;
  font-size: 16px;
  line-height: 30px;
  color: #4d5156;
}

/* Scroll bars */
.scroll {
  display: flex;
  flex-direction: column;
  justify-content: space-between;
  width: 13px;
  padding: 8px 0;
  background: #f3f3f3;
}

.scroll::before,
.scroll::after {
  content: "";
  align-self: center;
  border: 4px solid transparent;
}

.scroll::before {
  border-bottom: 5px solid #7a7a7a;
  border-top: none;
}

.scroll::after {
  border-top: 5px solid #444;
  border-bottom: none;
}

.scroll span {
  width: 100%;
  height: 334px;
  margin-top: 5px;
  margin-bottom: auto;
  background: #c1c1c1;
}

/* Taskbar */
.taskbar {
  display: flex;
  align-items: center;
  height: 54px;
  background: #202020;
  color: #fff;
  font-family: var(--system-font);
  font-size: 13px;
  line-height: 19px;
}

.widget {
  display: flex;
  align-items: center;
  gap: 4px;
  width: 535px;
  padding-left: 18px;
}

.gain {
  color: #58d321;
}

.alert {
  position: relative;
}

.alert svg {
  width: 34px;
  height: 36px;
}

.alert i {
  position: absolute;
  top: -1px;
  left: 14px;
  width: 18px;
  height: 18px;
  border-radius: 50%;
  background: #d12a1f;
  font-size: 12px;
  line-height: 18px;
  text-align: center;
}

.win {
  width: 28px;
  height: 28px;
}

.find {
  display: flex;
  align-items: center;
  gap: 12px;
  width: 254px;
  height: 36px;
  margin: 0 4px 0 16px;
  padding: 0 8px 0 12px;
  border-radius: 18px;
  background: #f3f3f3;
  color: #222;
  font-size: 14px;
}

.find svg {
  width: 18px;
  height: 18px;
}

.find input {
  flex: 1;
  min-width: 0;
}

.find input::placeholder {
  color: #555;
}

.find .art {
  width: 54px;
  height: 36px;
}

.apps {
  display: flex;
}

.apps span {
  position: relative;
  display: flex;
  align-items: center;
  justify-content: center;
  width: 51px;
  height: 50px;
}

.apps svg {
  width: 28px;
  height: 28px;
}

.apps .tall {
  width: 36px;
  height: 40px;
}

.apps .current {
  border-radius: 6px;
  background: #2d2d2d;
}

.open::after {
  content: "";
  position: absolute;
  bottom: 1px;
  width: 8px;
  height: 3px;
  border-radius: 2px;
  background: #9a9a9a;
}

.apps .current::after {
  width: 20px;
  background: #5cc0f0;
}

.tray {
  display: flex;
  align-items: center;
  gap: 5px;
  margin-left: auto;
  padding-right: 15px;
}

.tray svg {
  width: 22px;
  height: 22px;
}

.tray span {
  width: 32px;
}

.lang {
  width: 50px;
  padding-right: 8px;
  text-align: center;
}

.clock {
  width: 84px;
  text-align: right;
}

.tray .bell {
  width: 18px;
  margin: 0 14px 0 3px;
}

.tray .copilot {
  width: 32px;
  height: 34px;
}

/* Second window */
.shot-second .toolbar {
  height: 47px;
}

.shot-second .nav {
  width: 320px;
}

.shot-second .chrome-tools {
  width: 352px;
  padding-right: 9px;
}

.sticky {
  position: relative;
  height: 62px;
  padding-top: 4px;
  background: #fff;
  box-shadow: 0 3px 4px rgba(32, 33, 36, 0.2);
}

.sticky .logo {
  width: 195px;
  font-size: 31px;
}

.sticky .search {
  height: 38px;
  border: 1px solid #dfe1e5;
  box-shadow: none;
}

.sticky .search input {
  font-size: 16px;
  font-family: "Liberation Sans", sans-serif;
}

.sticky .account {
  padding-right: 28px;
}

.shot-second .results {
  margin-left: 220px;
}

.under {
  display: flex;
  align-items: flex-end;
  height: 27px;
  overflow: hidden;
}

.under .question {
  flex: none;
}

.topic {
  margin-bottom: 28px;
  line-height: 28px;
  color: #4d5156;
}

.extract {
  line-height: 28px;
  color: #4d5156;
  white-space: nowrap;
}

.extract small,
.date {
  font-size: 14px;
  color: #70757a;
}

.extract small {
  margin-left: 4px;
}

.date {
  line-height: 24px;
}

.related {
  margin: 32px 0 14px;
  line-height: 28px;
  color: #4d5156;
}

.related a {
  color: var(--link);
}

.last {
  height: 54px;
  padding-top: 6px;
}

.shot-second .scroll {
  width: 18px;
}

.shot-second .scroll span {
  height: 45px;
  margin-top: 670px;
  background: #a8a8a8;
}

.shot-second .taskbar {
  height: 56px;
}

.shot-second .widget {
  width: 512px;
  padding-left: 14px;
}

.shot-second .clock {
  margin-left: 32px;
}

/* Pen marks */
.marks {
  position: absolute;
  top: 0;
  left: 0;
  width: 2122px;
  height: 3000px;
  pointer-events: none;
}

.marks path {
  stroke-linecap: round;
  stroke-linejoin: round;
}

.marks [data-line] {
  fill: none;
  stroke-width: 9px;
}

.marks [data-area] {
  fill-rule: evenodd;
}

.red {
  fill: var(--pen-red);
}

.red [data-line] {
  stroke: var(--pen-red);
}

.green {
  fill: var(--pen-green);
}

.green [data-line] {
  stroke: var(--pen-green);
}
```
